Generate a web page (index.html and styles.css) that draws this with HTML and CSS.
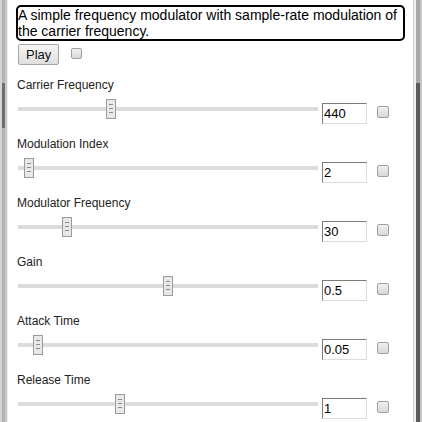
FILE: index.html
```html
<!DOCTYPE html>
<html lang="en">
<head>
    <meta charset="UTF-8">
    <title>FM Synth</title>
    <link rel="stylesheet" href="styles.css">
</head>
<body>
    <div class="window">
        <div class="edge edge-left"></div>
        <main class="panel">
            <p class="description">A simple frequency modulator with sample-rate modulation of the carrier frequency.</p>
            <div class="transport">
                <button type="button">Play</button>
                <input type="checkbox" class="toggle">
            </div>

            <div class="param">
                <label>Carrier Frequency</label>
                <div class="param-row">
                    <input type="range" min="0" max="1450" value="440">
                    <input type="text" class="value" value="440">
                    <input type="checkbox" class="toggle">
                </div>
            </div>

            <div class="param">
                <label>Modulation Index</label>
                <div class="param-row">
                    <input type="range" min="0" max="100" value="2">
                    <input type="text" class="value" value="2">
                    <input type="checkbox" class="toggle">
                </div>
            </div>

            <div class="param">
                <label>Modulator Frequency</label>
                <div class="param-row">
                    <input type="range" min="0" max="200" value="30">
                    <input type="text" class="value" value="30">
                    <input type="checkbox" class="toggle">
                </div>
            </div>

            <div class="param">
                <label>Gain</label>
                <div class="param-row">
                    <input type="range" min="0" max="1" step="0.01" value="0.5">
                    <input type="text" class="value" value="0.5">
                    <input type="checkbox" class="toggle">
                </div>
            </div>

            <div class="param">
                <label>Attack Time</label>
                <div class="param-row">
                    <input type="range" min="0" max="1" step="0.01" value="0.05">
                    <input type="text" class="value" value="0.05">
                    <input type="checkbox" class="toggle">
                </div>
            </div>

            <div class="param">
                <label>Release Time</label>
                <div class="param-row">
                    <input type="range" min="0" max="3" step="0.01" value="1">
                    <input type="text" class="value" value="1">
                    <input type="checkbox" class="toggle">
                </div>
            </div>
        </main>
        <div class="edge edge-right"></div>
    </div>
</body>
</html>
```

FILE: styles.css
```css
/* Page */
body {
    margin: 0;
    background: #fff;
    font-family: 'Liberation Sans', Arial, sans-serif;
    color: #222;
    overflow: hidden;
}

.window {
    display: flex;
    height: 100vh;
}

/* Window frame edges */
.edge {
    flex: none;
}

.edge-left {
    width: 8px;
    background:
        linear-gradient(#d4d4d4, #d4d4d4) 0 0 / 2px 100% no-repeat,
        linear-gradient(to bottom, #b4b4b4 0, #b4b4b4 83px, #6e6e6e 83px, #6e6e6e 128px, #b4b4b4 128px) 2px 0 / 3px 100% no-repeat,
        linear-gradient(#c8c8c8, #c8c8c8) 5px 0 / 2px 100% no-repeat,
        #eee;
}

.edge-right {
    width: 9px;
    background:
        linear-gradient(#cfcfcf, #cfcfcf) 0 0 / 1px 100% no-repeat,
        linear-gradient(#f2f2f2, #f2f2f2) 1px 0 / 2px 100% no-repeat,
        linear-gradient(to bottom, #a8a8a8 0, #a8a8a8 83px, #5a5a5a 83px) 3px 0 / 4px 100% no-repeat,
        #c4c4c4;
}

/* Main panel */
.panel {
    flex: 1;
    padding: 0 8px;
}

.description {
    margin: 5px 0 0;
    border: 2px solid #000;
    border-radius: 5px;
    font-size: 14px;
    line-height: 16px;
    color: #000;
}

.transport {
    display: flex;
    align-items: center;
    margin: 3px 0 0 2px;
}

.transport button {
    height: 21px;
    padding: 0 7px;
    border: 1px solid #a6a6a6;
    border-radius: 2px;
    background: linear-gradient(#f6f6f6, #dedede);
    font-family: 'Liberation Sans', Arial, sans-serif;
    font-size: 13px;
    color: #111;
}

.transport .toggle {
    margin: 0 0 2px 12px;
}

/* Checkbox */
.toggle {
    -webkit-appearance: none;
    appearance: none;
    width: 11px;
    height: 11px;
    margin: 0;
    border: 1px solid #a0a0a0;
    border-radius: 2px;
    background: linear-gradient(#f0f0f0, #d8d8d8);
    box-sizing: border-box;
}

/* Parameter rows */
.param {
    margin-top: 13px;
}

.param label {
    display: block;
    margin-left: 1px;
    font-size: 12px;
    line-height: 14px;
}

.param-row {
    display: flex;
    align-items: flex-start;
    height: 25px;
    margin-top: 7px;
}

.param-row input[type="range"] {
    -webkit-appearance: none;
    appearance: none;
    width: 300px;
    height: 20px;
    margin: 0 0 0 2px;
    background: transparent;
}

.param-row input[type="range"]::-webkit-slider-runnable-track {
    height: 4px;
    background: #dcdcdc;
}

.param-row input[type="range"]::-webkit-slider-thumb {
    -webkit-appearance: none;
    width: 10px;
    height: 20px;
    margin-top: -8px;
    border: 1px solid #9a9a9a;
    box-sizing: border-box;
    background:
        linear-gradient(#8c8c8c, #8c8c8c) center 4px / 4px 1px no-repeat,
        linear-gradient(#8c8c8c, #8c8c8c) center 8px / 4px 1px no-repeat,
        linear-gradient(#8c8c8c, #8c8c8c) center 12px / 4px 1px no-repeat,
        #e8e8e8;
}

.param-row .value {
    width: 45px;
    height: 21px;
    margin: 4px 0 0 4px;
    padding: 0 0 0 1px;
    border: 1px solid;
    border-color: #7a7a7a #dcdcdc #dcdcdc #7a7a7a;
    box-sizing: border-box;
    font-family: 'Liberation Sans', Arial, sans-serif;
    font-size: 13px;
    color: #000;
}

.param-row .toggle {
    width: 12px;
    height: 12px;
    margin: 7px 0 0 10px;
}
```
